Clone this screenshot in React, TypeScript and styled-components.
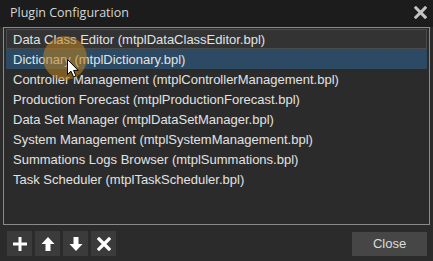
import React from 'react'
import styled, { createGlobalStyle } from 'styled-components'

const plugins = [
  'Data Class Editor (mtplDataClassEditor.bpl)',
  'Dictionary (mtplDictionary.bpl)',
  'Controller Management (mtplControllerManagement.bpl)',
  'Production Forecast (mtplProductionForecast.bpl)',
  'Data Set Manager (mtplDataSetManager.bpl)',
  'System Management (mtplSystemManagement.bpl)',
  'Summations Logs Browser (mtplSummations.bpl)',
  'Task Scheduler (mtplTaskScheduler.bpl)',
]

const Global = createGlobalStyle`
  html, body {
    margin: 0;
    padding: 0;
    background: #2b2b2b;
  }
`

const Window = styled.div`
  position: relative;
  width: 433px;
  height: 261px;
  background: #2b2b2b;
  display: flex;
  flex-direction: column;
  font-family: 'Liberation Sans', Arial, sans-serif;
  overflow: hidden;
`

const TitleBar = styled.div`
  height: 27px;
  flex: none;
  background: #1c1c1c;
  display: flex;
  align-items: center;
  justify-content: space-between;
  padding: 0 5px 2px 10px;
  box-sizing: border-box;
`

const Title = styled.span`
  color: #d6d6d6;
  font-family: 'Open Sans', 'Noto Sans', sans-serif;
  font-size: 12.5px;
`

const CloseX = styled.button`
  width: 14px;
  height: 14px;
  padding: 0;
  border: none;
  background: none;
  display: flex;
  color: #c4c4c4;
`

const ListBox = styled.ul`
  margin: 0 3px;
  padding: 1px 2px;
  height: 198px;
  box-sizing: border-box;
  list-style: none;
  border: 1px solid #8a8a8a;
  background: #2b2b2b;
  flex: none;
`

const Row = styled.li<{ $selected?: boolean; $focused?: boolean }>`
  height: 20px;
  box-sizing: border-box;
  padding-left: 6px;
  display: flex;
  align-items: center;
  font-size: 13px;
  color: #e2e2e2;
  white-space: nowrap;
  background: ${p => (p.$selected ? '#2c4a63' : p.$focused ? '#333333' : 'transparent')};
  border: 1px solid ${p => (p.$focused ? '#4a4a4a' : 'transparent')};
`

const Footer = styled.div`
  display: flex;
  align-items: center;
  justify-content: space-between;
  padding: 6px 6px 0 7px;
`

const Tools = styled.div`
  display: flex;
  gap: 3px;
`

const ToolButton = styled.button`
  width: 25px;
  height: 25px;
  padding: 0;
  border: none;
  background: #3b3b3b;
  display: flex;
  align-items: center;
  justify-content: center;
  color: #ffffff;
`

const CloseButton = styled.button`
  width: 75px;
  height: 24px;
  border: none;
  background: #464646;
  color: #dcdcdc;
  font-family: 'Liberation Sans', Arial, sans-serif;
  font-size: 13px;
  padding: 0 0 1px;
`

const Highlight = styled.div`
  position: absolute;
  left: 43px;
  top: 36px;
  width: 44px;
  height: 44px;
  border-radius: 50%;
  background: rgba(190, 130, 30, 0.55);
  pointer-events: none;
`

const Cursor = styled.svg`
  position: absolute;
  left: 67px;
  top: 59px;
  pointer-events: none;
`

const PlusIcon = () => (
  <svg width="14" height="14" viewBox="0 0 14 14">
    <path d="M5.5 0h3v5.5H14v3H8.5V14h-3V8.5H0v-3h5.5z" fill="currentColor" />
  </svg>
)

const UpIcon = () => (
  <svg width="14" height="14" viewBox="0 0 14 14">
    <path d="M7 0L13.5 7H9.5V14h-5V7H0.5z" fill="currentColor" />
  </svg>
)

const DownIcon = () => (
  <svg width="14" height="14" viewBox="0 0 14 14">
    <path d="M7 14L13.5 7H9.5V0h-5V7H0.5z" fill="currentColor" />
  </svg>
)

const CrossIcon = ({ size = 14 }: { size?: number }) => (
  <svg width={size} height={size} viewBox="0 0 14 14">
    <path d="M2 2L12 12M12 2L2 12" stroke="currentColor" strokeWidth="3.2" strokeLinecap="square" />
  </svg>
)

export default function App() {
  return (
    <Window>
      <Global />
      <TitleBar>
        <Title>Plugin Configuration</Title>
        <CloseX>
          <CrossIcon size={13} />
        </CloseX>
      </TitleBar>
      <ListBox>
        {plugins.map((name, i) => (
          <Row key={name} $focused={i === 0} $selected={i === 1}>
            {name}
          </Row>
        ))}
      </ListBox>
      <Footer>
        <Tools>
          <ToolButton><PlusIcon /></ToolButton>
          <ToolButton><UpIcon /></ToolButton>
          <ToolButton><DownIcon /></ToolButton>
          <ToolButton><CrossIcon /></ToolButton>
        </Tools>
        <CloseButton>Close</CloseButton>
      </Footer>
      <Highlight />
      <Cursor width="12" height="19" viewBox="0 0 12 19">
        <path d="M0.5 0.5V15.5L4 12.2L6.5 18L9 17L6.6 11.4H11.2Z" fill="#ffffff" stroke="#000000" strokeWidth="1" />
      </Cursor>
    </Window>
  )
}
